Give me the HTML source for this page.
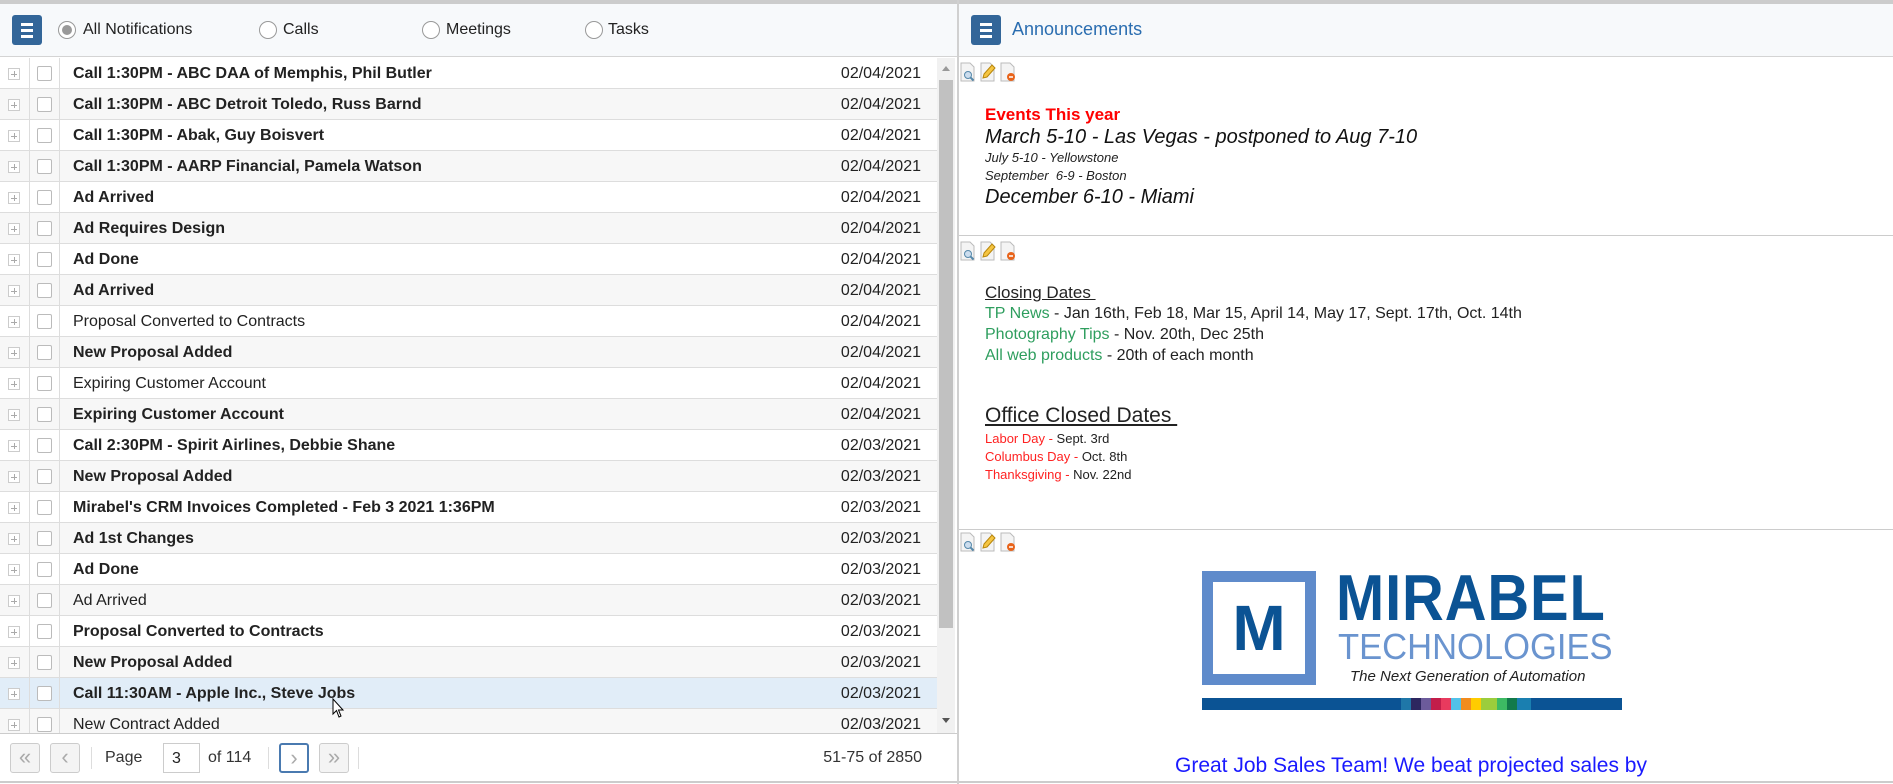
<!DOCTYPE html>
<html><head><meta charset="utf-8"><style>
*{box-sizing:border-box;margin:0;padding:0}
body{width:1893px;height:784px;position:relative;overflow:hidden;background:#fff;font-family:"Liberation Sans",Arial,sans-serif;color:#222}
.a{position:absolute}
.topbar{left:0;top:0;width:1893px;height:4px;background:#ccc}
.hdr{top:4px;height:53px;background:#f7f9fb;border-bottom:1px solid #d4d4d4}
.mbtn{width:30px;height:30px;background:#336699;border-radius:3px}
.mbtn i{position:absolute;left:9px;width:12px;height:3px;background:#fff}
.radio{width:18px;height:18px;border:1px solid #999;border-radius:50%;background:#fff}
.rl{font-size:16px;line-height:18px}
.row{left:0;width:937px;height:31px;border-bottom:1px solid #ddd;font-size:16px;line-height:31px}
.row .t{position:absolute;left:73px;top:0}
.row .d{position:absolute;right:16px;top:0;font-weight:normal}
.row .ex{position:absolute;left:8px;top:10px;width:12px;height:12px;border:1px solid #ccc;background:#fff}
.row .ex:before{content:"";position:absolute;left:2px;top:4.5px;width:6px;height:1px;background:#aaa}
.row .ex:after{content:"";position:absolute;left:4.5px;top:2px;width:1px;height:6px;background:#aaa}
.row .cb{position:absolute;left:37px;top:8px;width:15px;height:15px;border:1px solid #bbb;background:#fff;border-radius:2px}
.row .v1{position:absolute;left:29px;top:0;width:1px;height:31px;background:#ddd}
.row .v2{position:absolute;left:59px;top:0;width:1px;height:31px;background:#ddd}
.b{font-weight:bold}
.pb{top:743px;width:30px;height:30px;border:1px solid #ccc;border-radius:3px;background:#f4f4f4;color:#aaa;font-size:22px;text-align:center;line-height:26px}
</style></head><body>
<div class="a topbar"></div>
<div class="a hdr" style="left:0;width:958px"></div>
<div class="a mbtn" style="left:12px;top:15px"><i style="top:8px"></i><i style="top:14px"></i><i style="top:20px"></i></div>
<div class="a radio" style="left:58px;top:21px"><div style="position:absolute;left:3px;top:3px;width:10px;height:10px;border-radius:50%;background:#999"></div></div>
<div class="a rl" style="left:83px;top:21px">All Notifications</div>
<div class="a radio" style="left:259px;top:21px"></div><div class="a rl" style="left:283px;top:21px">Calls</div>
<div class="a radio" style="left:422px;top:21px"></div><div class="a rl" style="left:446px;top:21px">Meetings</div>
<div class="a radio" style="left:585px;top:21px"></div><div class="a rl" style="left:608px;top:21px">Tasks</div>
<div class="a" style="left:0;top:58px;width:937px;height:675px;overflow:hidden">
<div id="rows"></div>
</div>
<script>
var R=[["Call 1:30PM - ABC DAA of Memphis, Phil Butler",1,"02/04/2021"],["Call 1:30PM - ABC Detroit Toledo, Russ Barnd",1,"02/04/2021"],["Call 1:30PM - Abak, Guy Boisvert",1,"02/04/2021"],["Call 1:30PM - AARP Financial, Pamela Watson",1,"02/04/2021"],["Ad Arrived",1,"02/04/2021"],["Ad Requires Design",1,"02/04/2021"],["Ad Done",1,"02/04/2021"],["Ad Arrived",1,"02/04/2021"],["Proposal Converted to Contracts",0,"02/04/2021"],["New Proposal Added",1,"02/04/2021"],["Expiring Customer Account",0,"02/04/2021"],["Expiring Customer Account",1,"02/04/2021"],["Call 2:30PM - Spirit Airlines, Debbie Shane",1,"02/03/2021"],["New Proposal Added",1,"02/03/2021"],["Mirabel's CRM Invoices Completed - Feb 3 2021 1:36PM",1,"02/03/2021"],["Ad 1st Changes",1,"02/03/2021"],["Ad Done",1,"02/03/2021"],["Ad Arrived",0,"02/03/2021"],["Proposal Converted to Contracts",1,"02/03/2021"],["New Proposal Added",1,"02/03/2021"],["Call 11:30AM - Apple Inc., Steve Jobs",1,"02/03/2021"],["New Contract Added",0,"02/03/2021"]];
var h="";R.forEach(function(r,i){var bg=i==20?"#e1edf8":(i%2?"#f7f7f7":"#fff");h+='<div class="a row" style="top:'+(i*31)+'px;background:'+bg+'"><div class="ex"></div><div class="v1"></div><div class="cb"></div><div class="v2"></div><div class="t'+(r[1]?' b':'')+'">'+r[0]+'</div><div class="d">'+r[2]+'</div></div>'});
document.getElementById("rows").innerHTML=h;
</script>
<svg class="a" style="left:332px;top:698px" width="14" height="22" viewBox="0 0 14 22"><path d="M1 1 L1 16 L4.5 12.5 L7 19 L9 18 L6.5 12 L11 12 Z" fill="#fff" stroke="#000" stroke-width="1"/></svg>
<div class="a" style="left:937px;top:58px;width:18px;height:675px;background:#f1f1f1"></div>
<div class="a" style="left:939px;top:80px;width:14px;height:548px;background:#c1c1c1"></div>
<div class="a" style="left:942px;top:66px;width:0;height:0;border-left:4px solid transparent;border-right:4px solid transparent;border-bottom:5px solid #999"></div>
<div class="a" style="left:942px;top:718px;width:0;height:0;border-left:4px solid transparent;border-right:4px solid transparent;border-top:5px solid #555"></div>
<div class="a" style="left:0;top:733px;width:958px;height:1px;background:#ccc"></div>
<div class="a" style="left:0;top:781px;width:1893px;height:2px;background:#ccc"></div>
<div class="a" style="left:957px;top:0;width:2px;height:784px;background:#d0d0d0"></div>
<div class="a pb" style="left:10px">«</div>
<div class="a pb" style="left:50px">‹</div>
<div class="a" style="left:91px;top:747px;width:1px;height:22px;background:#ddd"></div>
<div class="a" style="left:105px;top:749px;font-size:16px;color:#333">Page</div>
<div class="a" style="left:163px;top:743px;width:37px;height:30px;border:1px solid #ccc;background:#fff;font-size:16px;padding:6px 8px">3</div>
<div class="a" style="left:208px;top:749px;font-size:16px;color:#333">of 114</div>
<div class="a" style="left:268px;top:747px;width:1px;height:22px;background:#ddd"></div>
<div class="a pb" style="left:279px;border:2px solid #4a7ab0;background:#fff">›</div>
<div class="a pb" style="left:319px">»</div>
<div class="a" style="left:358px;top:747px;width:1px;height:22px;background:#ddd"></div>
<div class="a" style="left:800px;top:749px;width:122px;text-align:right;font-size:16px;color:#333">51-75 of 2850</div>
<div class="a hdr" style="left:959px;width:934px"></div>
<div class="a mbtn" style="left:971px;top:15px"><i style="top:8px"></i><i style="top:14px"></i><i style="top:20px"></i></div>
<div class="a" style="left:1012px;top:19px;font-size:18px;color:#2a6db0">Announcements</div>
<script>
function icons(y){return '<svg class="a" style="left:960px;top:'+y+'px" width="60" height="20"><g><path d="M1 1h9l4 4v14H1z" fill="#f4f4f4" stroke="#bbb"/><circle cx="8" cy="13" r="3.5" fill="#cde" stroke="#58a"/><path d="M10.5 15.5l3 3" stroke="#58a" stroke-width="2"/></g><g transform="translate(20,0)"><path d="M1 1h9l4 4v14H1z" fill="#f4f4f4" stroke="#bbb"/><path d="M3 16l1-4 8-9 3 3-8 9z" fill="#f5c542" stroke="#b8860b"/></g><g transform="translate(40,0)"><path d="M1 1h9l4 4v14H1z" fill="#f4f4f4" stroke="#bbb"/><circle cx="11" cy="15" r="4" fill="#e8641b"/><path d="M9 15h4" stroke="#fff" stroke-width="1.5"/></g></svg>'}
document.write(icons(62)+icons(241)+icons(532));
</script>
<div class="a" style="left:985px;top:105px;font-size:17px;font-weight:bold;color:#f00">Events This year</div>
<div class="a" style="left:985px;top:126px;font-size:20px;font-style:italic;color:#111">March 5-10 - Las Vegas - postponed to Aug 7-10</div>
<div class="a" style="left:985px;top:150px;font-size:13px;font-style:italic;color:#222">July 5-10 - Yellowstone</div>
<div class="a" style="left:985px;top:168px;font-size:13px;font-style:italic;color:#222;white-space:pre">September  6-9 - Boston</div>
<div class="a" style="left:985px;top:186px;font-size:20px;font-style:italic;color:#111">December 6-10 - Miami</div>
<div class="a" style="left:959px;top:235px;width:934px;height:1px;background:#ccc"></div>
<div class="a" style="left:985px;top:283px;font-size:17px;text-decoration:underline;white-space:pre">Closing Dates </div>
<div class="a" style="left:985px;top:305px;font-size:16px"><span style="color:#2e9e5e">TP News</span> - Jan 16th, Feb 18, Mar 15, April 14, May 17, Sept. 17th, Oct. 14th</div>
<div class="a" style="left:985px;top:326px;font-size:16px"><span style="color:#2e9e5e">Photography Tips</span> - Nov. 20th, Dec 25th</div>
<div class="a" style="left:985px;top:347px;font-size:16px"><span style="color:#2e9e5e">All web products</span> - 20th of each month</div>
<div class="a" style="left:985px;top:404px;font-size:21px;text-decoration:underline;white-space:pre">Office Closed Dates </div>
<div class="a" style="left:985px;top:431px;font-size:13px"><span style="color:#f22">Labor Day - </span>Sept. 3rd</div>
<div class="a" style="left:985px;top:449px;font-size:13px"><span style="color:#f22">Columbus Day - </span>Oct. 8th</div>
<div class="a" style="left:985px;top:467px;font-size:13px"><span style="color:#f22">Thanksgiving - </span>Nov. 22nd</div>
<div class="a" style="left:959px;top:529px;width:934px;height:1px;background:#ccc"></div>
<div class="a" style="left:1202px;top:571px;width:114px;height:114px;border:11px solid #5f8bcb"></div>
<div class="a" style="left:1202px;top:571px;width:114px;height:114px;text-align:center;font-size:64px;font-weight:bold;color:#0b5394;line-height:114px">M</div>
<div class="a" style="left:1336px;top:563px;font-size:65px;font-weight:bold;color:#0b5394;letter-spacing:1px;line-height:70px;transform:scaleX(0.89);transform-origin:left">MIRABEL</div>
<div class="a" style="left:1338px;top:627px;font-size:36px;color:#6a94cf;line-height:40px;transform:scaleX(0.96);transform-origin:left">TECHNOLOGIES</div>
<div class="a" style="left:1350px;top:668px;font-size:15px;font-style:italic;color:#222">The Next Generation of Automation</div>
<div class="a" style="left:1202px;top:698px;width:420px;height:12px;background:#0b5394"></div>
<div class="a" style="left:1401px;top:698px;height:12px;display:flex">
<i style="width:10px;background:#1f77a8"></i><i style="width:10px;background:#2d2760"></i><i style="width:10px;background:#6c5b9b"></i><i style="width:10px;background:#c21d4a"></i><i style="width:10px;background:#e83a5e"></i><i style="width:10px;background:#52c1e8"></i><i style="width:10px;background:#f28c1e"></i><i style="width:10px;background:#ffcc00"></i><i style="width:16px;background:#9ccd3c"></i><i style="width:10px;background:#3dba63"></i><i style="width:10px;background:#127a4a"></i><i style="width:14px;background:#1a7fb0"></i>
</div>
<div class="a" style="left:1175px;top:754px;font-size:21px;color:#1a1aff">Great Job Sales Team! We beat projected sales by</div>
</body></html>
